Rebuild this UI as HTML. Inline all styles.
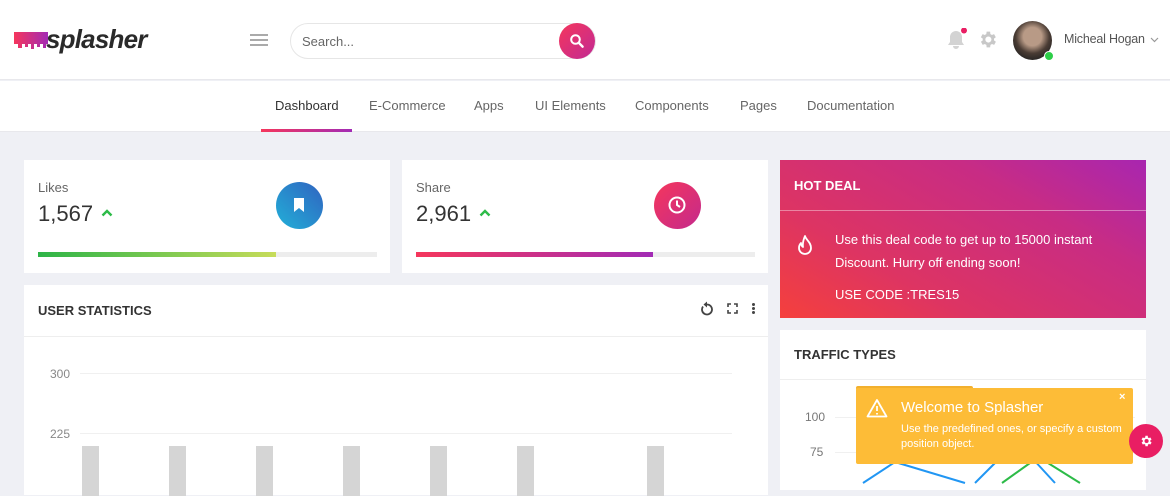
<!DOCTYPE html>
<html><head><meta charset="utf-8"><style>
*{box-sizing:border-box;margin:0;padding:0}
body{width:1170px;height:483px;overflow:hidden;background:#eff0f5;font-family:"Liberation Sans",sans-serif;position:relative;color:#333}
.abs{position:absolute}
.card{position:absolute;background:#fff}
</style></head><body>
<div class="abs" style="left:0;top:0;width:1170px;height:80px;background:#fff;border-bottom:1px solid #e8e8ec"></div>
<svg class="abs" style="left:14px;top:30px" width="34" height="20" viewBox="0 0 34 20"><defs><linearGradient id="lg" x1="0" x2="1"><stop offset="0" stop-color="#f5365c"/><stop offset="1" stop-color="#a22bb5"/></linearGradient></defs><path d="M0 2h34v12h-2v4h-3v-4h-3v3h-3v-3h-3v5h-3v-5h-3v3h-3v-3h-3v4H4v-4H0z" fill="url(#lg)"/></svg>
<div class="abs" style="left:46px;top:24px;font-size:26px;font-weight:bold;font-style:italic;color:#2a2a2a;letter-spacing:-0.8px">splasher</div>
<div class="abs" style="left:250px;top:34px;width:18px;height:2px;background:#aaa;box-shadow:0 5px 0 #aaa,0 10px 0 #aaa"></div>
<div class="abs" style="left:290px;top:23px;width:306px;height:36px;border:1px solid #e6e6e6;border-radius:18px;background:#fff"></div>
<div class="abs" style="left:302px;top:34px;font-size:13px;color:#666">Search...</div>
<div class="abs" style="left:559px;top:23px;width:36px;height:36px;border-radius:50%;background:linear-gradient(135deg,#f5365c,#c12a94)"></div>
<svg class="abs" style="left:569px;top:33px" width="16" height="16" viewBox="0 0 16 16"><circle cx="6.5" cy="6.5" r="4.3" fill="none" stroke="#fff" stroke-width="2"/><path d="M9.8 9.8l3.8 3.8" stroke="#fff" stroke-width="2.4" stroke-linecap="round"/></svg>
<svg class="abs" style="left:945px;top:28px" width="22" height="22" viewBox="0 0 22 22"><path d="M3 17h16l-2-3V9a6 6 0 0 0-12 0v5z M8 18a3 3 0 0 0 6 0z" fill="#d3d3d3"/><circle cx="19" cy="2.5" r="3" fill="#e91e63"/></svg>
<svg class="abs" style="left:977px;top:29px" width="21" height="21" viewBox="0 0 24 24"><path fill="#c8c8c8" d="M19.4 13a7.5 7.5 0 0 0 0-2l2.1-1.6-2-3.5-2.5 1a7.4 7.4 0 0 0-1.7-1L15 3h-4l-.4 2.9a7.4 7.4 0 0 0-1.7 1l-2.5-1-2 3.5L6.6 11a7.5 7.5 0 0 0 0 2l-2.1 1.6 2 3.5 2.5-1a7.4 7.4 0 0 0 1.7 1L11 21h4l.4-2.9a7.4 7.4 0 0 0 1.7-1l2.5 1 2-3.5zM13 15.5a3.5 3.5 0 1 1 0-7 3.5 3.5 0 0 1 0 7z"/></svg>
<div class="abs" style="left:1013px;top:21px;width:39px;height:39px;border-radius:50%;background:radial-gradient(circle at 50% 40%,#b89a86 0 30%,#4a3c34 55%,#2c2826 75%);"></div>
<div class="abs" style="left:1044px;top:51px;width:10px;height:10px;border-radius:50%;background:#2dce48;border:1px solid #fff"></div>
<div class="abs" style="left:1064px;top:32px;font-size:12.5px;color:#555;letter-spacing:-0.2px">Micheal Hogan</div>
<svg class="abs" style="left:1150px;top:37px" width="9" height="6"><path d="M1 1l3.5 3.5L8 1" fill="none" stroke="#999" stroke-width="1.2"/></svg>
<div class="abs" style="left:0;top:81px;width:1170px;height:51px;background:#fff;border-bottom:1px solid #e8e8ec"></div>
<div class="abs" style="top:98px;left:0;width:1170px;font-size:13px;color:#666">
<span class="abs" style="left:275px;color:#333">Dashboard</span><span class="abs" style="left:369px">E-Commerce</span><span class="abs" style="left:474px">Apps</span><span class="abs" style="left:535px">UI Elements</span><span class="abs" style="left:635px">Components</span><span class="abs" style="left:740px">Pages</span><span class="abs" style="left:807px">Documentation</span></div>
<div class="abs" style="left:261px;top:129px;width:91px;height:3px;background:linear-gradient(90deg,#f5365c,#a22bb5)"></div>
<div class="card" style="left:24px;top:160px;width:366px;height:113px">
<div class="abs" style="left:14px;top:20px;font-size:13px;color:#666">Likes</div>
<div class="abs" style="left:14px;top:41px;font-size:22px;color:#333">1,567</div>
<svg class="abs" style="left:77px;top:49px" width="12" height="8"><path d="M1.5 6.5L6 2l4.5 4.5" fill="none" stroke="#2dbb48" stroke-width="2.4"/></svg>
<div class="abs" style="left:252px;top:22px;width:47px;height:47px;border-radius:50%;background:linear-gradient(225deg,#3063c0,#22b0d8)"></div>
<svg class="abs" style="left:268px;top:37px" width="14" height="16"><path d="M2 1h10v14l-5-4-5 4z" fill="#fff"/></svg>
<div class="abs" style="left:14px;top:92px;width:339px;height:5px;background:#ededed"></div>
<div class="abs" style="left:14px;top:92px;width:238px;height:5px;background:linear-gradient(90deg,#2db447,#c7dc5a)"></div>
</div>
<div class="card" style="left:402px;top:160px;width:366px;height:113px">
<div class="abs" style="left:14px;top:20px;font-size:13px;color:#666">Share</div>
<div class="abs" style="left:14px;top:41px;font-size:22px;color:#333">2,961</div>
<svg class="abs" style="left:77px;top:49px" width="12" height="8"><path d="M1.5 6.5L6 2l4.5 4.5" fill="none" stroke="#2dbb48" stroke-width="2.4"/></svg>
<div class="abs" style="left:252px;top:22px;width:47px;height:47px;border-radius:50%;background:linear-gradient(135deg,#f5365c,#c42a8c)"></div>
<svg class="abs" style="left:265px;top:35px" width="20" height="20"><circle cx="10" cy="10" r="7.5" fill="none" stroke="#fff" stroke-width="2"/><path d="M10 5.5V10l3 2" fill="none" stroke="#fff" stroke-width="2"/></svg>
<div class="abs" style="left:14px;top:92px;width:339px;height:5px;background:#ededed"></div>
<div class="abs" style="left:14px;top:92px;width:237px;height:5px;background:linear-gradient(90deg,#f5365c,#a22bb5)"></div>
</div>
<div class="card" style="left:780px;top:160px;width:366px;height:158px;background:linear-gradient(30deg,#f5403c 0%,#dd3463 30%,#c82c84 70%,#a826b0 100%);color:#fff">
<div class="abs" style="left:14px;top:18px;font-size:13px;font-weight:bold">HOT DEAL</div>
<div class="abs" style="left:0;top:50px;width:366px;height:1px;background:rgba(255,255,255,.4)"></div>
<svg class="abs" style="left:14px;top:74px" width="22" height="24" viewBox="0 0 22 24"><path d="M11 2c1 4 6 6 6 12a6 6 0 0 1-12 0c0-3 2-5 2-5 0 3 2 4 2 4s-1-4 2-11z" fill="none" stroke="#fff" stroke-width="1.8" stroke-linejoin="round"/></svg>
<div class="abs" style="left:55px;top:68px;font-size:13px;line-height:23px;width:300px">Use this deal code to get up to 15000 instant Discount. Hurry off ending soon!</div>
<div class="abs" style="left:55px;top:127px;font-size:13px">USE CODE :TRES15</div>
</div>
<div class="card" style="left:24px;top:285px;width:744px;height:210px">
<div class="abs" style="left:14px;top:18px;font-size:13px;font-weight:bold;color:#333">USER STATISTICS</div>
<svg class="abs" style="left:676px;top:16px" width="14" height="15" viewBox="0 0 14 15"><path d="M3 5.5A5 5 0 1 0 7 3.5" fill="none" stroke="#444" stroke-width="1.8"/><path d="M7 0.5v6L3.5 3.5z" fill="#444"/></svg>
<svg class="abs" style="left:703px;top:18px" width="11" height="11"><path d="M1 4V1h3M7 1h3v3M10 7v3H7M4 10H1V7" fill="none" stroke="#444" stroke-width="1.6"/></svg>
<div class="abs" style="left:728px;top:18px;width:3px;height:3px;border-radius:50%;background:#444;box-shadow:0 4px 0 #444,0 8px 0 #444"></div>
<div class="abs" style="left:0;top:51px;width:744px;height:1px;background:#eee"></div>
<div class="abs" style="left:26px;top:82px;font-size:12px;color:#888">300</div>
<div class="abs" style="left:26px;top:142px;font-size:12px;color:#888">225</div>
<div class="abs" style="left:56px;top:88px;width:652px;height:1px;background:#f0f0f0"></div>
<div class="abs" style="left:56px;top:148px;width:652px;height:1px;background:#f0f0f0"></div>
<div class="abs" style="left:58px;top:161px;width:17px;height:50px;background:#d5d5d5;box-shadow:87px 0 #d5d5d5,174px 0 #d5d5d5,261px 0 #d5d5d5,348px 0 #d5d5d5,435px 0 #d5d5d5,565px 0 #d5d5d5"></div>
</div>
<div class="card" style="left:780px;top:330px;width:366px;height:160px">
<div class="abs" style="left:14px;top:17px;font-size:13px;font-weight:bold;color:#333">TRAFFIC TYPES</div>
<div class="abs" style="left:0;top:49px;width:366px;height:1px;background:#eee"></div>
<div class="abs" style="left:25px;top:80px;font-size:12px;color:#777">100</div>
<div class="abs" style="left:30px;top:115px;font-size:12px;color:#777">75</div>
<div class="abs" style="left:55px;top:87px;width:300px;height:1px;background:#f0f0f0"></div>
<div class="abs" style="left:55px;top:122px;width:300px;height:1px;background:#f0f0f0"></div>
<svg class="abs" style="left:0;top:120px" width="366" height="40"><path d="M83 33L115 12 185 33M195 33L220 8M252 8L275 33" fill="none" stroke="#2196f3" stroke-width="2"/><path d="M222 33L250 13M268 13L300 33" fill="none" stroke="#2dbb48" stroke-width="2"/></svg>
</div>
<div class="abs" style="left:856px;top:386px;width:117px;height:4px;background:#f2b02e;border-radius:2px"></div>
<div class="abs" style="left:856px;top:388px;width:277px;height:76px;background:#fdbc37;color:#fff;border-radius:2px">
<svg class="abs" style="left:10px;top:10px" width="22" height="20" viewBox="0 0 22 20"><path d="M11 2L20.5 18.5H1.5Z" fill="none" stroke="#fff" stroke-width="1.8" stroke-linejoin="round"/><path d="M11 8v5M11 15v1.5" stroke="#fff" stroke-width="1.8"/></svg>
<div class="abs" style="left:45px;top:11px;font-size:15px">Welcome to Splasher</div>
<div class="abs" style="left:45px;top:34px;font-size:11px;line-height:15px;width:225px">Use the predefined ones, or specify a custom position object.</div>
<div class="abs" style="left:263px;top:3px;font-size:11px;font-weight:bold">×</div>
</div>
<div class="abs" style="left:1129px;top:424px;width:34px;height:34px;border-radius:50%;background:#e91e63"></div>
<svg class="abs" style="left:1139px;top:434px" width="14" height="14" viewBox="0 0 24 24"><path fill="#fff" d="M19.4 13a7.5 7.5 0 0 0 0-2l2.1-1.6-2-3.5-2.5 1a7.4 7.4 0 0 0-1.7-1L15 3h-4l-.4 2.9a7.4 7.4 0 0 0-1.7 1l-2.5-1-2 3.5L6.6 11a7.5 7.5 0 0 0 0 2l-2.1 1.6 2 3.5 2.5-1a7.4 7.4 0 0 0 1.7 1L11 21h4l.4-2.9a7.4 7.4 0 0 0 1.7-1l2.5 1 2-3.5zM13 15.5a3.5 3.5 0 1 1 0-7 3.5 3.5 0 0 1 0 7z"/></svg>
</body></html>
